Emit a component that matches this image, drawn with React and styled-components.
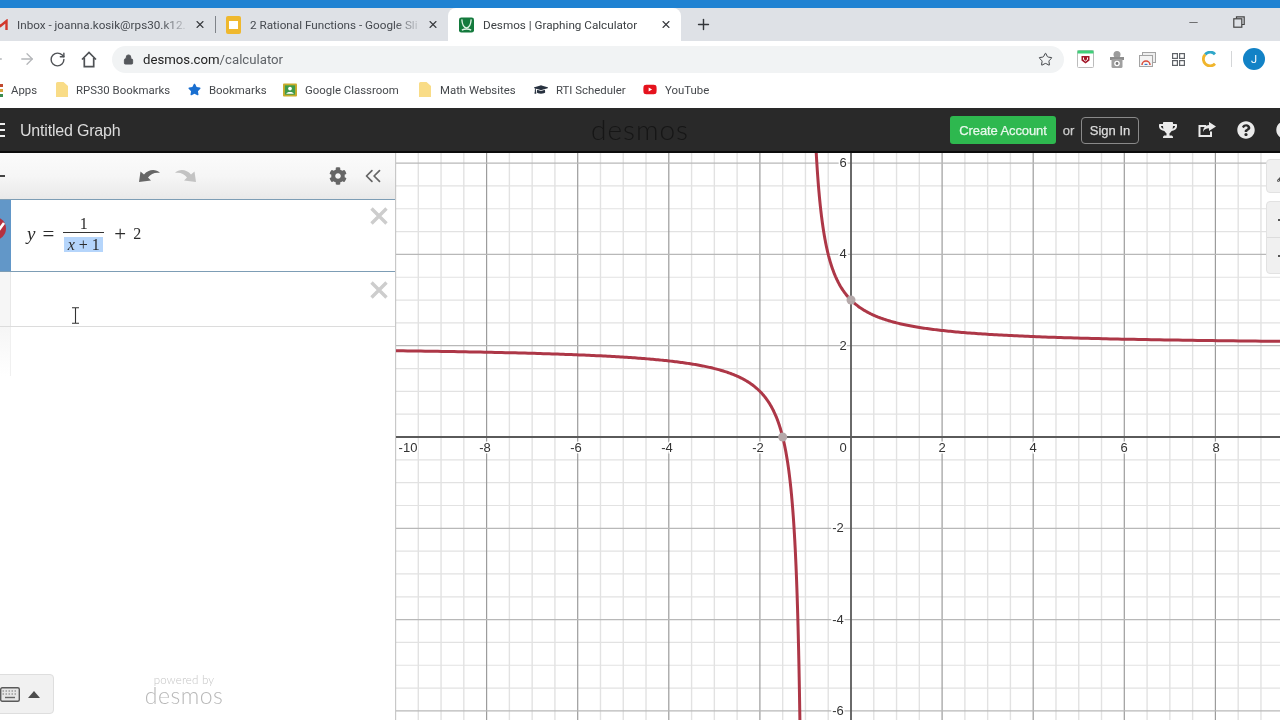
import React from "react";
import styled, { createGlobalStyle } from "styled-components";
import { ArrowRight, ArrowLeft, RotateCw, Lock, Star, Plus, Minus, X, ChevronsLeft } from "lucide-react";
import { FaTrophy, FaQuestionCircle, FaCog, FaWrench, FaStar, FaGraduationCap, FaYoutube } from "react-icons/fa";

const Global = createGlobalStyle`
  html, body { margin: 0; padding: 0; background: #fff; overflow: hidden; }
  * { box-sizing: border-box; }
`;
const UI = `Roboto, "Noto Sans", sans-serif`;
const HELV = `"Liberation Sans", Arial, sans-serif`;

const Page = styled.div`
  width: 1280px; height: 720px; overflow: hidden; display: flex; flex-direction: column;
  font-family: ${HELV}; filter: blur(0.4px);
`;
const TopEdge = styled.div`height: 8px; background: #1f82d2; flex: none;`;

const TabStrip = styled.div`height: 33px; flex: none; background: #dee1e6; display: flex; align-items: stretch; overflow: hidden;`;
const Tab = styled.div`
  position: relative; width: 233px; flex: none; display: flex; align-items: center; padding: 0 9px 0 11px;
  font: 11.7px ${UI}; color: ${p => (p.$active ? "#3c4043" : "#45494f")};
  background: ${p => (p.$active ? "#fff" : "transparent")};
  border-radius: ${p => (p.$active ? "8px 8px 0 0" : "0")};
  margin-left: ${p => (p.$first ? "-18px" : "0")};
  ${p => p.$sep && `&::before { content: ""; position: absolute; left: 0; top: 8px; bottom: 8px; width: 1px; background: #7f8389; }`}
`;
const TabIcon = styled.span`width: 15px; height: 16px; flex: none; display: flex; align-items: center; justify-content: center; margin-right: 9px;`;
const TabTitle = styled.span`
  flex: 1; white-space: nowrap; min-width: 0;
  ${p => p.$fade && `-webkit-mask-image: linear-gradient(90deg, #000 85%, rgba(0,0,0,.15) 100%); mask-image: linear-gradient(90deg, #000 85%, rgba(0,0,0,.15) 100%);`}
`;
const TabClose = styled.span`width: 12px; display: flex; justify-content: center; color: #35383c; flex: none; margin-left: 8px;`;
const NewTab = styled.span`width: 44px; display: flex; align-items: center; justify-content: center; color: #33363a;`;
const WindowControls = styled.div`margin-left: auto; margin-right: -28px; display: flex; align-items: center; margin-top: -5px;`;
const WindowBtn = styled.span`width: 46px; display: flex; justify-content: center; color: #4a4a4a;`;

const Toolbar = styled.div`height: 36px; flex: none; background: #fff; display: flex; align-items: center;`;
const NavBtn = styled.span`width: 31px; flex: none; display: flex; justify-content: center; color: ${p => p.$dim ? "#b4b6b9" : "#4f5256"}; margin-left: ${p => p.$first ? "-20px" : "0"};`;
const Omnibox = styled.div`
  width: 952px; height: 27px; margin: 0 6px 0 8px; flex: none; border-radius: 14px; background: #f1f3f4;
  display: flex; align-items: center; padding: 0 10px 0 11px; font: 13.2px ${UI}; color: #222;
`;
const LockWrap = styled.span`display: flex; color: #54575b; margin-right: 9px;`;
const UrlPath = styled.span`color: #5f6368;`;
const StarWrap = styled.span`margin-left: auto; display: flex; color: #404347; margin-right: 1px;`;
const ExtSlot = styled.span`width: 31px; flex: none; display: flex; justify-content: center; align-items: center;`;
const ToolbarSep = styled.span`width: 1px; height: 16px; background: #d4d6d8; margin: 0 11px 0 6px; flex: none;`;
const Avatar = styled.span`
  width: 22px; height: 22px; border-radius: 50%; background: #1282c6; color: #fff; flex: none;
  font: 11px ${UI}; display: flex; align-items: center; justify-content: center;
`;

const BookmarkBar = styled.div`height: 31px; flex: none; background: #fff; display: flex; align-items: center; padding-bottom: 6px; margin-left: -9px;`;
const Bookmark = styled.span`
  display: flex; align-items: center; flex: none; font: 11.4px ${UI}; color: #45484c; white-space: nowrap; width: ${p => p.$w}px;
`;
const BookmarkIcon = styled.span`width: 14px; height: 14px; display: flex; justify-content: center; align-items: center; flex: none; margin-right: ${p => p.$gap ?? 8}px;`;

const Header = styled.header`
  height: 45px; flex: none; background: #292929; border-bottom: 2px solid #0b0b0b;
  display: grid; grid-template-columns: 1fr auto 1fr; align-items: center; padding-top: 1px;
`;
const HeaderLeft = styled.div`display: flex; align-items: center;`;
const MenuBars = styled.span`
  width: 5px; height: 14px; margin-right: 15px; flex: none;
  background: repeating-linear-gradient(180deg, #eee 0 2px, transparent 2px 6px);
`;
const GraphTitle = styled.span`font: 16px ${HELV}; color: #dcdcdc; letter-spacing: -0.2px; margin-top: 1px;`;
const HeaderLogo = styled.span`font: 300 28px Lato, "Noto Sans", sans-serif; color: #161616; letter-spacing: 1px; margin-top: -2px;`;
const HeaderRight = styled.div`display: flex; align-items: center; justify-content: flex-end; margin-right: -24px;`;
const CreateBtn = styled.span`
  width: 106px; height: 28px; background: #2eb84f; border-radius: 3px;
  display: flex; align-items: center; justify-content: center; font: 13px ${HELV}; -webkit-text-stroke: 0.25px #e8f8ec; letter-spacing: -0.1px; color: #e8f8ec;
`;
const OrText = styled.span`font: 13px ${HELV}; -webkit-text-stroke: 0.25px #ccc; color: #ccc; width: 25px; text-align: center;`;
const SignInBtn = styled.span`
  width: 58px; height: 27px; border: 1px solid #8a8a8a; border-radius: 4px; color: #ddd;
  display: flex; align-items: center; justify-content: center; font: 13px ${HELV}; -webkit-text-stroke: 0.25px #ddd; margin-right: 9px;
`;
const HeaderIcon = styled.span`width: 39px; display: flex; justify-content: center; color: #eaeaea; flex: none;`;

const Main = styled.div`flex: 1; display: flex; min-height: 0;`;
const Panel = styled.aside`
  position: relative; width: 396px; flex: none; background: #fff; border-right: 1px solid #c8c8c8;
  display: flex; flex-direction: column;
`;
const PanelBar = styled.div`
  height: 46px; flex: none; background: linear-gradient(180deg, #fbfbfb 0%, #f6f6f6 50%, #e9e9e9 100%);
  display: flex; align-items: center;
`;
const AddDash = styled.span`width: 5px; height: 2px; background: #444; flex: none;`;
const BarIcon = styled.span`
  display: flex; justify-content: center; color: ${p => p.$dim ? "#c3c3c3" : "#666"}; flex: none;
  width: ${p => p.$w ?? 36}px; margin-left: ${p => p.$ml ?? 0}px; margin-top: ${p => p.$mt ?? 0}px;
`;
const ExprRow = styled.div`
  position: relative; height: ${p => p.$h}px; flex: none; display: flex; background: #fff;
  border-top: ${p => p.$focus ? "1px solid #7d9db5" : "none"};
  border-bottom: ${p => p.$focus ? "1px solid #7d9db5" : "1px solid #dcdcdc"};
`;
const ExprStrip = styled.div`
  width: 11px; flex: none; background: ${p => p.$focus ? "#6297c8" : "#f6f6f6"}; border-right: 1px solid ${p => p.$focus ? "#6297c8" : "#e8e8e8"};
  display: flex; padding-top: 17px; justify-content: flex-end; overflow: hidden;
`;
const CheckDisc = styled.span`
  width: 23px; height: 23px; flex: none; border-radius: 50%; background: #b5303f; margin-right: 4px; display: flex; align-items: center; justify-content: flex-end;
`;
const MathLine = styled.div`
  display: flex; align-items: center; padding: 0 0 3px 16px; font: 16px "Liberation Serif", "Times New Roman", serif; color: #2b2b2b;
`;
const MathVar = styled.i`margin-right: 7px; font-size: 19px;`;
const MathOp = styled.span`margin-right: ${p => p.$mr ?? 9}px; margin-left: ${p => p.$ml ?? 0}px; font-size: 21px;`;
const Fraction = styled.span`display: flex; flex-direction: column; align-items: center; width: 41px; line-height: 15px; font-size: 16px;`;
const Numerator = styled.span`border-bottom: 1px solid #333; width: 100%; text-align: center; padding-bottom: 1px;`;
const Denominator = styled.span`background: #b5d5fb; padding: 0 3.5px; margin-top: 4px; white-space: nowrap;`;
const CloseX = styled.span`position: absolute; right: 7px; top: ${p => p.$top}px; display: flex;`;
const StripTail = styled.div`
  width: 11px; height: 49px; flex: none; border-right: 1px solid #f0f0f0;
  background: linear-gradient(180deg, #f6f6f6, #ffffff);
`;
const Cursor = styled.span`position: absolute; left: 71px; top: 154px; display: flex;`;
const PanelFooter = styled.div`margin-top: auto; display: flex; align-items: flex-end; padding-bottom: 6px;`;
const KeyboardBtn = styled.div`
  width: 64px; height: 40px; margin-left: -10px; background: #f1f1f1; border: 1px solid #dedede; border-radius: 4px;
  display: flex; align-items: center; gap: 8px; padding-left: 9px;
`;
const Powered = styled.div`
  margin-left: 92px; margin-bottom: 9px; width: 76px; display: flex; flex-direction: column; align-items: center;
`;
const PoweredBy = styled.span`font: 300 11.5px/10px Lato, sans-serif; color: #c4c4c4; letter-spacing: 0.2px;`;
const PoweredLogo = styled.span`font: 300 23px/20px Lato, sans-serif; color: #b8b8b8; letter-spacing: 0.5px;`;

const GraphPane = styled.section`position: relative; flex: 1; min-width: 0; background: #fff;`;
const GraphSvg = styled.svg`display: block; width: 100%; height: 100%;`;
const ToolBox = styled.div`
  position: absolute; left: 870px; top: ${p => p.$top}px; width: 30px; height: ${p => p.$h}px;
  background: #f0f0f0; border: 1px solid #e2e2e2; border-radius: 4px; display: flex; flex-direction: column;
`;
const ToolCell = styled.span`flex: 1; display: flex; align-items: center; padding-left: 10px; color: #555; border-top: ${p => p.$line ? "1px solid #dcdcdc" : "none"};`;
const ToolDash = styled.span`width: 4px; height: 2px; background: #555; margin-left: 1px;`;

/* ---- small drawn icons ---- */
const GmailIcon = () => (
  <svg width="15" height="12" viewBox="0 0 15 12"><path d="M1.5 11V2L7.5 7l6-5v9" fill="none" stroke="#d2382c" strokeWidth="2.4" /></svg>
);
const SlidesIcon = () => (
  <svg width="15" height="18" viewBox="0 0 15 18"><rect width="15" height="18" rx="2" fill="#efb82e" /><rect x="3" y="5" width="9" height="8" fill="#fff" /></svg>
);
const DesmosIcon = () => (
  <svg width="16" height="16" viewBox="0 0 16 16"><rect width="16" height="16" rx="2.5" fill="#147a3d" /><path d="M3 2c.5 6 2.5 9 5 9s4.500-3 5-9M3 13.500c3-1.500 7-1.500 10 0" fill="none" stroke="#dff3e5" strokeWidth="1.4" /></svg>
);
const FolderIcon = () => (
  <svg width="12" height="15" viewBox="0 0 12 15"><path d="M0 1.500A1.500 1.500 0 0 1 1.500 0h6L12 4v11H0z" fill="#f9dc87" /></svg>
);
const ClassroomIcon = () => (
  <svg width="15" height="14" viewBox="0 0 15 14"><rect width="15" height="14" rx="1" fill="#c9ac2c" /><rect x="2" y="2" width="11" height="10" fill="#3f9b4a" /><circle cx="7.500" cy="5.500" r="2" fill="#fff" /><path d="M3.500 11c.5-2.500 7.500-2.500 8 0z" fill="#fff" /></svg>
);
const AppsGrid = () => (
  <svg width="14" height="14" viewBox="0 0 14 14" fill="#c0492f"><rect x="9" y="1" width="3" height="3" /><rect x="9" y="6" width="3" height="3" fill="#d8a23a" /><rect x="9" y="11" width="3" height="3" fill="#3a8c4f" /></svg>
);
const PocketIcon = () => (
  <svg width="17" height="18" viewBox="0 0 17 18"><rect x=".5" y=".5" width="16" height="17" rx="1" fill="#fff" stroke="#bcbcbc" /><rect x=".5" y=".5" width="16" height="3" fill="#3fcf79" /><path d="M4.500 6h8v4.500l-4 3-4-3z" fill="#a3182a" /><path d="M6.500 7.500v2l2 1.500 2-1.500v-2" fill="none" stroke="#fff" strokeWidth="1" /></svg>
);
const BadgeIcon = () => (
  <svg width="16" height="19" viewBox="0 0 16 19"><circle cx="8" cy="4.500" r="3.500" fill="#9b9b9b" /><rect x="1" y="7" width="14" height="3" fill="#8d8d8d" /><rect x="2.500" y="9" width="11" height="9" rx="1.500" fill="#a0a0a0" /><circle cx="8" cy="13.500" r="2.800" fill="#fff" /><circle cx="8" cy="13.500" r="1.400" fill="#777" /></svg>
);
const TabsIcon = () => (
  <svg width="17" height="15" viewBox="0 0 17 15"><rect x="3.500" y=".5" width="13" height="10" fill="#eee" stroke="#a3a3a3" /><rect x=".5" y="3.500" width="13" height="11" fill="#f3f3f3" stroke="#a3a3a3" /><path d="M3 13a4 4 0 0 1 8 0" fill="none" stroke="#d94a3a" strokeWidth="1.500" /><path d="M5.200 13a2 2 0 0 1 3.600 0" fill="#3b78c9" /></svg>
);
const QuadIcon = () => (
  <svg width="13" height="13" viewBox="0 0 13 13" fill="none" stroke="#5f6368" strokeWidth="1.200"><rect x=".6" y=".6" width="4.800" height="4.800" /><rect x="7.600" y=".6" width="4.800" height="4.800" /><rect x=".6" y="7.600" width="4.800" height="4.800" /><rect x="7.600" y="7.600" width="4.800" height="4.800" /></svg>
);
const ArcIcon = () => (
  <svg width="15" height="16" viewBox="0 0 15 16" fill="none" strokeWidth="2.800"><path d="M13 3.200A6.500 6.500 0 0 0 3.200 3.500" stroke="#2fa7c9" /><path d="M3.200 3.500A6.500 6.500 0 0 0 13 12.800" stroke="#f0b52c" /></svg>
);
const RestoreIcon = () => (
  <svg width="12" height="12" viewBox="0 0 12 12" fill="none" stroke="#444" strokeWidth="1.200"><path d="M3.500 2.500V.8h7.700v7.700H9" /><rect x=".8" y="2.800" width="8" height="8.400" /></svg>
);
const HomeIcon = () => (
  <svg width="16" height="17" viewBox="0 0 16 17" fill="none" stroke="#4f5256" strokeWidth="1.700" strokeLinejoin="miter"><path d="M1 8.500L8 1.500l7 7M3.300 7v8.700h9.400V7" /></svg>
);
const CrossMark = () => (
  <svg width="18" height="18" viewBox="0 0 18 18"><path d="M1.500 1.500l15 15M16.500 1.500l-15 15" stroke="#cdcdcd" strokeWidth="3.400" /></svg>
);
const IBeam = () => (
  <svg width="9" height="17" viewBox="0 0 9 17" fill="none" stroke="#333" strokeWidth="1.100"><path d="M1 .8h7M1 16.200h7M4.500 1v15" /></svg>
);
const KeyboardIcon = () => (
  <svg width="20" height="15" viewBox="0 0 20 15">
    <rect x=".7" y=".7" width="18.600" height="13.600" rx="1.500" fill="#e6e6e6" stroke="#5a5a5a" strokeWidth="1.400" />
    <path d="M2.500 4h15M2.500 7h15" stroke="#777" strokeWidth="1.200" strokeDasharray="1.500 1.500" /><path d="M5 10.500h10" stroke="#666" strokeWidth="1.400" />
  </svg>
);
const Caret = () => (<svg width="12" height="7" viewBox="0 0 12 7"><path d="M6 0l6 7H0z" fill="#4d4d4d" /></svg>);
const ShareBox = () => (
  <svg width="18" height="16" viewBox="0 0 18 16"><path d="M13 9.500V14H1.500V4H8" fill="none" stroke="#eaeaea" strokeWidth="2" /><path d="M11 0l7 4.500L11 9V6.300C8 6.300 6 7.500 5 10c0-4 2.500-7 6-7z" fill="#eaeaea" /></svg>
);
const UndoArrow = ({ flip }) => (
  <svg width="21" height="14" viewBox="0 0 21 14" style={flip ? { transform: "scaleX(-1)" } : undefined}>
    <path d="M0 14L1.500 3.500 5 6.500C9 2 16 0 21 5 16.500 4 12 5.500 9 9.500l3 3z" fill="currentColor" />
  </svg>
);

/* ---- graph ---- */
const X0 = 851, Y0 = 437, UX = 45.55, UY = 45.65;
const px = x => X0 + UX * x;
const py = y => Y0 - UY * y;
const range = (a, b) => { const out = []; for (let i = a; i <= b; i++) out.push(i); return out; };
const curve = (from, to) => {
  const pts = [];
  const n = 400;
  for (let i = 0; i <= n; i++) {
    const t = i / n;
    const u = from * Math.pow(to / from, t); // log spacing of x+1
    const x = u - 1;
    pts.push(`${px(x).toFixed(2)},${py(1 / u + 2).toFixed(2)}`);
  }
  return "M" + pts.join("L");
};
const xLabels = [[-10, 408], [-8, 485], [-6, 576], [-4, 667], [-2, 758], [0, 843], [2, 942], [4, 1033], [6, 1124], [8, 1216]];
const yLabels = [[6, 843], [4, 843], [2, 843], [-2, 838], [-4, 838], [-6, 838]];

const Graph = () => (
  <GraphSvg viewBox="396 153 884 567">
    {range(-21, 20).map(i => (i % 4 !== 0 ? <line key={"v" + i} x1={px(i / 2)} x2={px(i / 2)} y1="153" y2="720" stroke="#e2e2e2" strokeWidth="1.400" /> : null))}
    {range(-14, 14).map(i => (i % 4 !== 0 ? <line key={"h" + i} y1={py(i / 2)} y2={py(i / 2)} x1="396" x2="1280" stroke="#e2e2e2" strokeWidth="1.200" /> : null))}
    {range(-5, 5).filter(i => i !== 0).map(i => <line key={"V" + i} x1={px(i * 2)} x2={px(i * 2)} y1="153" y2="720" stroke="#9c9c9c" strokeWidth="1.200" />)}
    {range(-3, 3).filter(i => i !== 0).map(i => <line key={"H" + i} y1={py(i * 2)} y2={py(i * 2)} x1="396" x2="1280" stroke="#b8b8b8" strokeWidth="1.300" />)}
    <line x1={X0} x2={X0} y1="153" y2="720" stroke="#5a5a5a" strokeWidth="1.800" />
    <line x1="396" x2="1280" y1={Y0} y2={Y0} stroke="#5a5a5a" strokeWidth="1.800" />
    <path d={curve(0.13, 20)} fill="none" stroke="#ad3747" strokeWidth="3" />
    <path d={curve(-0.11, -10)} fill="none" stroke="#ad3747" strokeWidth="3" />
    <circle cx={px(-1.5)} cy={Y0} r="4.500" fill="#b5a9aa" />
    <circle cx={X0} cy={py(3)} r="4.500" fill="#b5a9aa" />
    {xLabels.map(([v, x]) => (
      <text key={"xl" + v} x={x} y="452" textAnchor="middle" fontFamily={HELV} fontSize="13" fill="#333" stroke="#fff" strokeWidth="3" paintOrder="stroke">{v}</text>
    ))}
    {yLabels.map(([v, x]) => (
      <text key={"yl" + v} x={x} y={py(v) + 4} textAnchor="middle" fontFamily={HELV} fontSize="13" fill="#333" stroke="#fff" strokeWidth="3" paintOrder="stroke">{v}</text>
    ))}
  </GraphSvg>
);

export default function App() {
  return (
    <>
      <Global />
      <Page>
        <TopEdge />
        <TabStrip>
          <Tab $first>
            <TabIcon><GmailIcon /></TabIcon>
            <TabTitle $fade>Inbox - joanna.kosik@rps30.k12.a</TabTitle>
            <TabClose><X size={13} strokeWidth={2.2} /></TabClose>
          </Tab>
          <Tab $sep>
            <TabIcon><SlidesIcon /></TabIcon>
            <TabTitle $fade>2 Rational Functions - Google Sli</TabTitle>
            <TabClose><X size={13} strokeWidth={2.2} /></TabClose>
          </Tab>
          <Tab $active>
            <TabIcon><DesmosIcon /></TabIcon>
            <TabTitle>Desmos | Graphing Calculator</TabTitle>
            <TabClose><X size={13} strokeWidth={2.2} /></TabClose>
          </Tab>
          <NewTab><Plus size={17} strokeWidth={2} /></NewTab>
          <WindowControls>
            <WindowBtn><Minus size={13} strokeWidth={1.4} /></WindowBtn>
            <WindowBtn><RestoreIcon /></WindowBtn>
            <WindowBtn><X size={13} /></WindowBtn>
          </WindowControls>
        </TabStrip>

        <Toolbar>
          <NavBtn $first $dim><ArrowLeft size={18} /></NavBtn>
          <NavBtn $dim><ArrowRight size={18} strokeWidth={1.7} /></NavBtn>
          <NavBtn><RotateCw size={17} strokeWidth={2} /></NavBtn>
          <NavBtn><HomeIcon /></NavBtn>
          <Omnibox>
            <LockWrap><Lock size={11} fill="#54575b" /></LockWrap>
            desmos.com<UrlPath>/calculator</UrlPath>
            <StarWrap><Star size={15} strokeWidth={1.6} /></StarWrap>
          </Omnibox>
          <ExtSlot><PocketIcon /></ExtSlot>
          <ExtSlot><BadgeIcon /></ExtSlot>
          <ExtSlot><TabsIcon /></ExtSlot>
          <ExtSlot><QuadIcon /></ExtSlot>
          <ExtSlot><ArcIcon /></ExtSlot>
          <ToolbarSep />
          <Avatar>J</Avatar>
        </Toolbar>

        <BookmarkBar>
          <Bookmark $w={64}><BookmarkIcon $gap={6}><AppsGrid /></BookmarkIcon>Apps</Bookmark>
          <Bookmark $w={132}><BookmarkIcon $gap={7}><FolderIcon /></BookmarkIcon>RPS30 Bookmarks</Bookmark>
          <Bookmark $w={96}><BookmarkIcon $gap={8}><FaStar size={13} color="#1a6fd0" /></BookmarkIcon>Bookmarks</Bookmark>
          <Bookmark $w={135}><BookmarkIcon><ClassroomIcon /></BookmarkIcon>Google Classroom</Bookmark>
          <Bookmark $w={116}><BookmarkIcon $gap={8}><FolderIcon /></BookmarkIcon>Math Websites</Bookmark>
          <Bookmark $w={109}><BookmarkIcon><FaGraduationCap size={15} color="#27313f" /></BookmarkIcon>RTI Scheduler</Bookmark>
          <Bookmark $w={70}><BookmarkIcon><FaYoutube size={15} color="#e5121d" /></BookmarkIcon>YouTube</Bookmark>
        </BookmarkBar>

        <Header>
          <HeaderLeft>
            <MenuBars />
            <GraphTitle>Untitled Graph</GraphTitle>
          </HeaderLeft>
          <HeaderLogo>desmos</HeaderLogo>
          <HeaderRight>
            <CreateBtn>Create Account</CreateBtn>
            <OrText>or</OrText>
            <SignInBtn>Sign In</SignInBtn>
            <HeaderIcon><FaTrophy size={18} /></HeaderIcon>
            <HeaderIcon><ShareBox /></HeaderIcon>
            <HeaderIcon><FaQuestionCircle size={18} /></HeaderIcon>
            <HeaderIcon><FaQuestionCircle size={18} /></HeaderIcon>
          </HeaderRight>
        </Header>

        <Main>
          <Panel>
            <PanelBar>
              <AddDash />
              <BarIcon $ml={126} $mt={-3}><UndoArrow /></BarIcon>
              <BarIcon $dim $mt={-3}><UndoArrow flip /></BarIcon>
              <BarIcon $w={36} $ml={117}><FaCog size={18} /></BarIcon>
              <BarIcon $w={34} $ml={0}><ChevronsLeft size={26} strokeWidth={1.6} /></BarIcon>
            </PanelBar>
            <ExprRow $h={73} $focus>
              <ExprStrip $focus>
                <CheckDisc>
                  <svg width="16" height="16" viewBox="0 0 16 16"><path d="M2 9l4 4 8-11" fill="none" stroke="#fff" strokeWidth="2.600" /></svg>
                </CheckDisc>
              </ExprStrip>
              <MathLine>
                <MathVar>y</MathVar>
                <MathOp>=</MathOp>
                <Fraction>
                  <Numerator>1</Numerator>
                  <Denominator><i>x</i> + 1</Denominator>
                </Fraction>
                <MathOp $ml={10} $mr={7}>+</MathOp>
                <span>2</span>
              </MathLine>
              <CloseX $top={7}><CrossMark /></CloseX>
            </ExprRow>
            <ExprRow $h={55}>
              <ExprStrip />
              <CloseX $top={9}><CrossMark /></CloseX>
            </ExprRow>
            <StripTail />
            <Cursor><IBeam /></Cursor>
            <PanelFooter>
              <KeyboardBtn><KeyboardIcon /><Caret /></KeyboardBtn>
              <Powered>
                <PoweredBy>powered by</PoweredBy>
                <PoweredLogo>desmos</PoweredLogo>
              </Powered>
            </PanelFooter>
          </Panel>
          <GraphPane>
            <Graph />
            <ToolBox $top={6} $h={34}><ToolCell><FaWrench size={11} /></ToolCell></ToolBox>
            <ToolBox $top={48} $h={73}>
              <ToolCell><ToolDash /></ToolCell>
              <ToolCell $line><ToolDash /></ToolCell>
            </ToolBox>
          </GraphPane>
        </Main>
      </Page>
    </>
  );
}
